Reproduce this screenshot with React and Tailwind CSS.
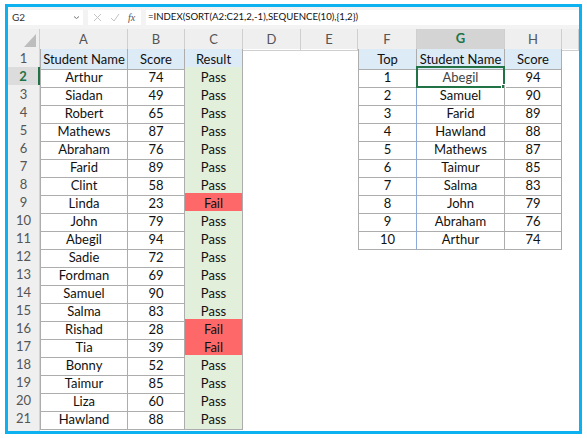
import React from "react"

const students = [
  ["Arthur", 74], ["Siadan", 49], ["Robert", 65], ["Mathews", 87], ["Abraham", 76],
  ["Farid", 89], ["Clint", 58], ["Linda", 23], ["John", 79], ["Abegil", 94],
  ["Sadie", 72], ["Fordman", 69], ["Samuel", 90], ["Salma", 83], ["Rishad", 28],
  ["Tia", 39], ["Bonny", 52], ["Taimur", 85], ["Liza", 60], ["Hawland", 88],
]

const top10 = [...students].sort((a, b) => b[1] - a[1]).slice(0, 10)

const colLetters = ["A", "B", "C", "D", "E", "F", "G", "H", ""]
const gridCols = "grid grid-cols-[32px_88px_57px_58px_58px_57px_59px_88px_57px_1fr]"

const font = { fontFamily: "Lato, 'Open Sans', sans-serif" }

function Cell({ row, col }) {
  const base = "flex items-center justify-center text-[13px] text-[#111] leading-none whitespace-nowrap overflow-hidden pt-[1px]"
  // left table A..C
  if (col <= 2) {
    const edge = `border-r border-b border-[#adadad] ${col === 0 ? "border-l" : ""}`
    if (row === 1) {
      const label = ["Student Name", "Score", "Result"][col]
      return <div className={`${base} ${edge} bg-[#ddebf7]`}>{label}</div>
    }
    const [name, score] = students[row - 2]
    if (col === 0) return <div className={`${base} ${edge}`}>{name}</div>
    if (col === 1) return <div className={`${base} ${edge}`}>{score}</div>
    const pass = score >= 40
    return (
      <div className={`${base} ${edge} ${pass ? "bg-[#e2efda]" : "bg-[#ff6868] text-[#2a0000]"}`}>
        {pass ? "Pass" : "Fail"}
      </div>
    )
  }
  // right table F..H
  if (col >= 5 && col <= 7 && row <= 11) {
    const k = col - 5
    let edge = "border-b border-[#adadad] "
    if (row === 1) {
      edge += k === 0 ? "border-l border-r" : "border-r"
      const label = ["Top", "Student Name", "Score"][k]
      return <div className={`${base} ${edge} bg-[#ddebf7]`}>{label}</div>
    }
    if (k === 0) edge += "border-l border-r border-r-[#8eaadb]"
    if (k === 1) edge += "border-r"
    if (k === 2) edge += "border-r border-r-[#8eaadb]"
    const [name, score] = top10[row - 2]
    if (k === 0) return <div className={`${base} ${edge}`}>{row - 1}</div>
    if (k === 2) return <div className={`${base} ${edge}`}>{score}</div>
    const selected = row === 2
    return (
      <div className={`${base} ${edge} relative overflow-visible ${selected ? "text-[#444]" : ""}`}>
        {name}
        {selected && (
          <div className="absolute -left-px -top-px -right-px -bottom-px border-2 border-[#217346]">
            <div className="absolute -right-[3px] -bottom-[3px] w-[5px] h-[5px] bg-[#217346] border border-white" />
          </div>
        )}
      </div>
    )
  }
  return <div />
}

function FormulaBar() {
  return (
    <div className="h-[22px] bg-[#f3f3f3] flex items-start pt-[3px] gap-[5px] text-[10px]">
      <div className="w-[75px] h-[15px] bg-white flex items-center justify-between pl-[4px] pr-[3px] text-[#333]">
        <span>G2</span>
        <svg width="7" height="5" viewBox="0 0 7 5">
          <path d="M1 1.5 L3.5 3.5 L6 1.5" stroke="#777" fill="none" strokeWidth="1" />
        </svg>
      </div>
      <div className="w-[53px] h-[15px] bg-white flex items-center pl-[5px] gap-[8px]">
        <svg width="9" height="9" viewBox="0 0 9 9">
          <path d="M1 1 L8 8 M8 1 L1 8" stroke="#c4c4c4" strokeWidth="1" />
        </svg>
        <svg width="10" height="9" viewBox="0 0 10 9">
          <path d="M1 5 L4 8 L9 1" stroke="#c4c4c4" fill="none" strokeWidth="1" />
        </svg>
        <span className="italic text-[#555] text-[10px]" style={{ fontFamily: "'Liberation Serif', serif" }}>fx</span>
      </div>
      <div className="flex-1 h-[15px] bg-white flex items-center pl-[2px] text-[9.6px] text-[#111] whitespace-nowrap">
        =INDEX(SORT(A2:C21,2,-1),SEQUENCE(10),{"{"}1,2{"}"})
      </div>
    </div>
  )
}

export default function App() {
  const rows = Array.from({ length: 21 }, (_, i) => i + 1)
  return (
    <div className="w-[587px] h-[438px] bg-white pl-[5px] pt-[4px]" style={font}>
      <div className="w-[577px] h-[430px] border-[3px] border-[#0cb2ef] overflow-hidden bg-white">
        <FormulaBar />

        {/* column headers */}
        <div className={`${gridCols} h-[20px] bg-[#efefef] text-[13px] text-[#555]`}>
          <div className="border-r border-b border-[#cfcfcf] flex items-end justify-end pr-[3px] pb-[3px]">
            <svg width="12" height="13" viewBox="0 0 12 13">
              <polygon points="12,0 12,13 0,13" fill="#bdbdbd" />
            </svg>
          </div>
          {colLetters.map((c, i) =>
            i === 6 ? (
              <div key={i} className="flex items-center justify-center bg-[#d4d4d4] border-r border-[#cfcfcf] border-b-2 border-b-[#217346] text-[#217346] font-bold">
                {c}
              </div>
            ) : (
              <div key={i} className="flex items-center justify-center border-r border-b border-[#cfcfcf]">
                {c}
              </div>
            ),
          )}
        </div>

        {rows.map((r) => (
          <div key={r} className={`${gridCols} h-[18px]`}>
            {r === 2 ? (
              <div className="flex items-center justify-center bg-[#dcdcdc] border-b border-[#d4d4d4] border-r-2 border-r-[#217346] text-[13px] text-[#217346] font-bold">
                {r}
              </div>
            ) : (
              <div className="flex items-center justify-center bg-[#efefef] border-r border-b border-[#d4d4d4] text-[13px] text-[#555]">
                {r}
              </div>
            )}
            {colLetters.map((_, c) => (
              <Cell key={c} row={r} col={c} />
            ))}
          </div>
        ))}

        <div className={`${gridCols} h-[4px]`}>
          <div className="bg-[#efefef] border-r border-[#d4d4d4]" />
        </div>
      </div>
    </div>
  )
}
